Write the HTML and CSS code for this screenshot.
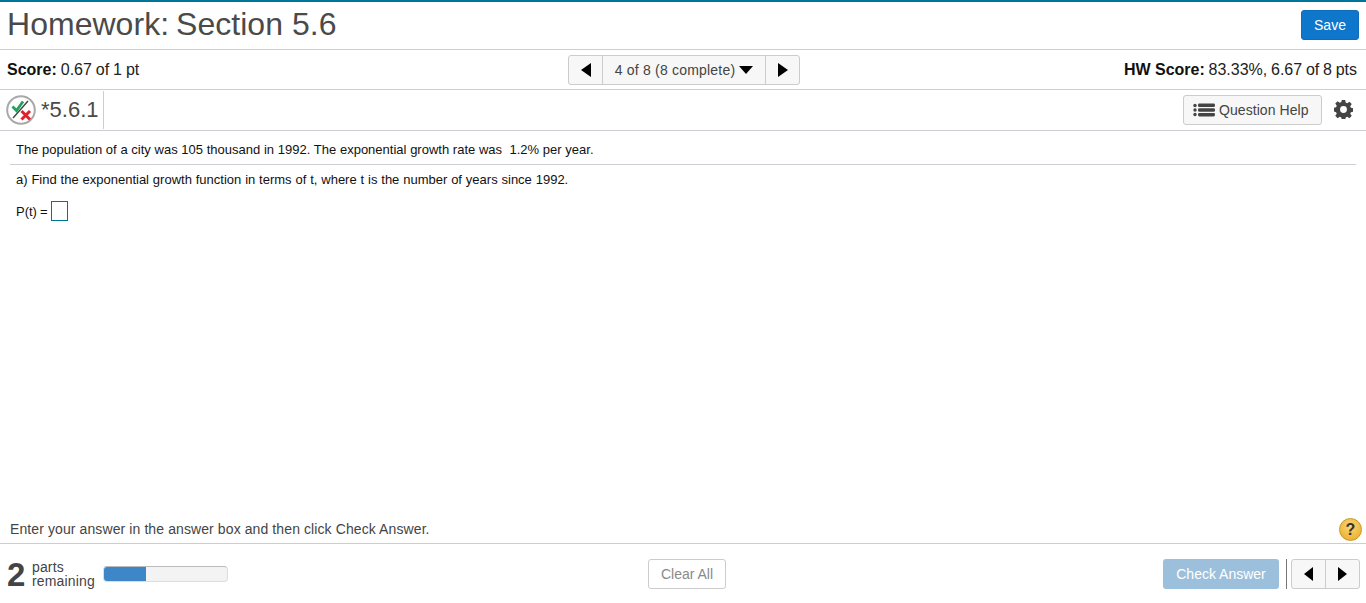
FILE: index.html
```html
<!DOCTYPE html>
<html lang="en">
<head>
<meta charset="utf-8">
<title>Homework: Section 5.6</title>
<link rel="stylesheet" href="styles.css">
</head>
<body>
<div class="page">
  <header class="title-bar">
    <h1 class="title"><span class="title-lead">Homework:</span> Section 5.6</h1>
    <button class="save">Save</button>
  </header>
  <section class="score-bar">
    <div class="score"><b>Score:</b> 0.67 of 1 pt</div>
    <div class="pager">
      <span class="pager-arrow"><svg width="10" height="14" viewBox="0 0 10 14"><path d="M10 0V14L0 7Z"/></svg></span>
      <span class="pager-label">4 of 8 (8 complete)<svg class="caret" width="14" height="8" viewBox="0 0 14 8"><path d="M0 0H14L7 8Z"/></svg></span>
      <span class="pager-arrow"><svg width="10" height="14" viewBox="0 0 10 14"><path d="M0 0V14L10 7Z"/></svg></span>
    </div>
    <div class="score score-right"><b>HW Score:</b> 83.33%, 6.67 of 8 pts</div>
  </section>
  <section class="question-bar">
    <div class="question-id">
      <svg class="status" width="30" height="30" viewBox="0 0 30 30">
        <circle cx="15" cy="15" r="13.8" fill="#fff" stroke="#a9a9a9" stroke-width="2"/>
        <path d="M7 23L22 6" stroke="#444" stroke-width="1.4"/>
        <path d="M6.5 11.5L10.5 15.5L17 6.5" fill="none" stroke="#1fa35a" stroke-width="2.8"/>
        <path d="M15.5 16L24 24.5M24 16L15.5 24.5" stroke="#e0202c" stroke-width="3"/>
      </svg>
      <span class="question-number">*5.6.1</span>
    </div>
    <div class="question-tools">
      <button class="help">
        <svg width="22" height="14" viewBox="0 0 22 14" fill="#444"><circle cx="2" cy="2.5" r="1.7"/><circle cx="2" cy="7" r="1.7"/><circle cx="2" cy="11.5" r="1.7"/><rect x="5" y="0.5" width="17" height="3.6" rx="1.4"/><rect x="5" y="5.2" width="17" height="3.6" rx="1.4"/><rect x="5" y="9.9" width="17" height="3.6" rx="1.4"/></svg>
        Question Help
      </button>
      <svg class="gear" width="19" height="19" viewBox="0 0 20 20"><path fill="#444" fill-rule="evenodd" d="M8.2 0h3.6l.5 2.7 1.6.7 2.3-1.6 2.5 2.5-1.6 2.3.7 1.6 2.7.5v3.6l-2.7.5-.7 1.6 1.6 2.3-2.5 2.5-2.3-1.6-1.6.7-.5 2.7H8.2l-.5-2.7-1.6-.7-2.3 1.6-2.5-2.5 1.6-2.3-.7-1.6L-.5 11.8V8.2l2.7-.5.7-1.6-1.6-2.3 2.5-2.5 2.3 1.6 1.6-.7zM10 6.4a3.6 3.6 0 1 0 0 7.2 3.6 3.6 0 0 0 0-7.2z"/></svg>
    </div>
  </section>
  <main class="content">
    <p class="stem">The population of a city was 105 thousand in 1992. The exponential growth rate was &nbsp;1.2% per year.</p>
    <p class="part">a) Find the exponential growth function in terms of t, where t is the number of years since 1992.</p>
    <div class="answer"><span>P(t) =</span><span class="answer-box"></span></div>
  </main>
  <div class="hint">
    <span>Enter your answer in the answer box and then click Check Answer.</span>
    <span class="hint-help">?</span>
  </div>
  <footer class="footer">
    <div class="parts">
      <span class="parts-count">2</span>
      <span class="parts-label">parts<br>remaining</span>
      <span class="progress"><span class="progress-fill"></span></span>
    </div>
    <button class="clear">Clear All</button>
    <div class="actions">
      <button class="check">Check Answer</button>
      <span class="divider"></span>
      <div class="mini-pager">
        <span class="mini-arrow"><svg width="9" height="14" viewBox="0 0 9 14"><path d="M9 0V14L0 7Z"/></svg></span>
        <span class="mini-arrow"><svg width="9" height="14" viewBox="0 0 9 14"><path d="M0 0V14L9 7Z"/></svg></span>
      </div>
    </div>
  </footer>
</div>
</body>
</html>
```
FILE: styles.css
```css
* { box-sizing: border-box; }
html, body { margin: 0; padding: 0; height: 100%; overflow: hidden; background: #fff; }
body { font-family: "Liberation Sans", Arial, sans-serif; color: #444; }
button { font-family: inherit; cursor: pointer; }

.page { height: 603px; display: flex; flex-direction: column; border-top: 2px solid #00759a; }

.title-bar { height: 48px; flex: none; display: flex; align-items: center; justify-content: space-between; padding: 0 7px; border-bottom: 1px solid #ccced6; }
.title { margin: 0 0 4px; font-size: 32px; font-weight: 400; color: #4a4a4a; line-height: 44px; letter-spacing: 0.03px; }
.title-lead { margin-right: -2px; }
.save { width: 58px; height: 30px; padding: 0; background: #0f77cb; color: #fff; border: 1px solid #0d6db9; border-radius: 3px; font-size: 14px; margin-top: -1px; }

.score-bar { height: 40px; flex: none; display: grid; grid-template-columns: 561px auto 1fr; align-items: center; padding: 0 9px 0 7px; border-bottom: 1px solid #ccced6; }
.score { font-size: 16px; color: #222; word-spacing: -0.5px; }
.score b { color: #111; word-spacing: 0; }
.score-right { text-align: right; word-spacing: -0.7px; }
.pager { display: flex; height: 30px; border: 1px solid #ccc; border-radius: 3px; background: #f7f7f7; font-size: 14px; letter-spacing: 0.2px; color: #444; }
.pager-arrow { width: 33px; display: flex; align-items: center; justify-content: center; }
.pager-arrow svg { fill: #000; }
.pager-label { width: 164px; display: flex; align-items: center; justify-content: center; gap: 4px; border-left: 1px solid #ccc; border-right: 1px solid #ccc; }
.caret { fill: #000; }

.question-bar { height: 41px; flex: none; display: flex; justify-content: space-between; align-items: center; padding-right: 13px; border-bottom: 1px solid #ccced6; }
.question-id { height: 38px; display: flex; align-items: center; padding-left: 6px; padding-right: 4px; border-right: 1px solid #ccced6; margin-top: -1px; }
.question-number { font-size: 22px; color: #4a4a4a; margin-left: 5px; }
.question-tools { display: flex; align-items: center; gap: 12px; }
.help { display: flex; align-items: center; gap: 4px; width: 139px; height: 30px; padding: 0 0 1px 9px; background: #f7f7f7; border: 1px solid #ccc; border-radius: 3px; color: #444; font-size: 14px; letter-spacing: 0.06px; }
.gear { display: block; margin-top: -2px; }

.content { flex: 1; padding: 0 10px; font-size: 13px; color: #111; }
.stem { margin: 0; height: 34px; padding: 11px 6px 0; line-height: 15px; border-bottom: 1px solid #ccced6; word-spacing: 0.1px; }
.part { margin: 0; padding: 7px 6px 0; line-height: 15px; word-spacing: 0.25px; }
.answer { display: flex; align-items: center; gap: 3px; padding: 0 6px; margin-top: 14px; height: 20px; word-spacing: -0.5px; }
.answer-box { display: block; width: 17px; height: 20px; border: 1px solid #00759a; }

.hint { height: 26px; flex: none; display: flex; justify-content: space-between; align-items: center; padding: 0 4px 2px 10px; font-size: 14px; color: #444; letter-spacing: 0.1px; }
.hint-help { width: 23px; height: 23px; border-radius: 50%; background: radial-gradient(circle at 50% 35%, #f8d77a, #e8a91e); border: 1px solid #c9962b; color: #333; font-weight: 700; font-size: 16px; line-height: 21px; text-align: center; letter-spacing: 0; }

.footer { height: 60px; flex: none; display: grid; grid-template-columns: 641px auto 1fr; align-items: center; padding: 0 6px 0 7px; border-top: 1px solid #ccced6; }
.parts { display: flex; align-items: center; }
.parts-count { font-size: 33px; font-weight: 700; color: #444; line-height: 1; width: 25px; padding-top: 2px; }
.parts-label { font-size: 14px; line-height: 14px; color: #444; letter-spacing: 0.15px; }
.progress { display: block; width: 125px; height: 16px; margin-left: 8.6px; background: #f3f3f3; border: 1px solid #ddd; border-top-color: #bbb; border-radius: 4px; overflow: hidden; }
.progress-fill { display: block; width: 33.6%; height: 100%; background: #3d87c8; }
.clear { width: 78px; height: 30px; padding: 0; background: #fff; border: 1px solid #ccc; border-radius: 3px; color: #8a8a8a; font-size: 14px; }
.actions { display: flex; justify-content: flex-end; align-items: center; }
.check { width: 116px; height: 30px; padding: 0; background: #9cc0dc; border: none; border-radius: 3px; color: #fff; font-size: 14px; }
.divider { width: 1px; height: 30px; background: #777; margin: 0 4px 0 7px; }
.mini-pager { display: flex; height: 30px; border: 1px solid #ccc; border-radius: 3px; background: #f7f7f7; }
.mini-arrow { width: 33px; display: flex; align-items: center; justify-content: center; }
.mini-arrow + .mini-arrow { width: 34px; border-left: 1px solid #ccc; }
.mini-arrow svg { fill: #000; }
```
